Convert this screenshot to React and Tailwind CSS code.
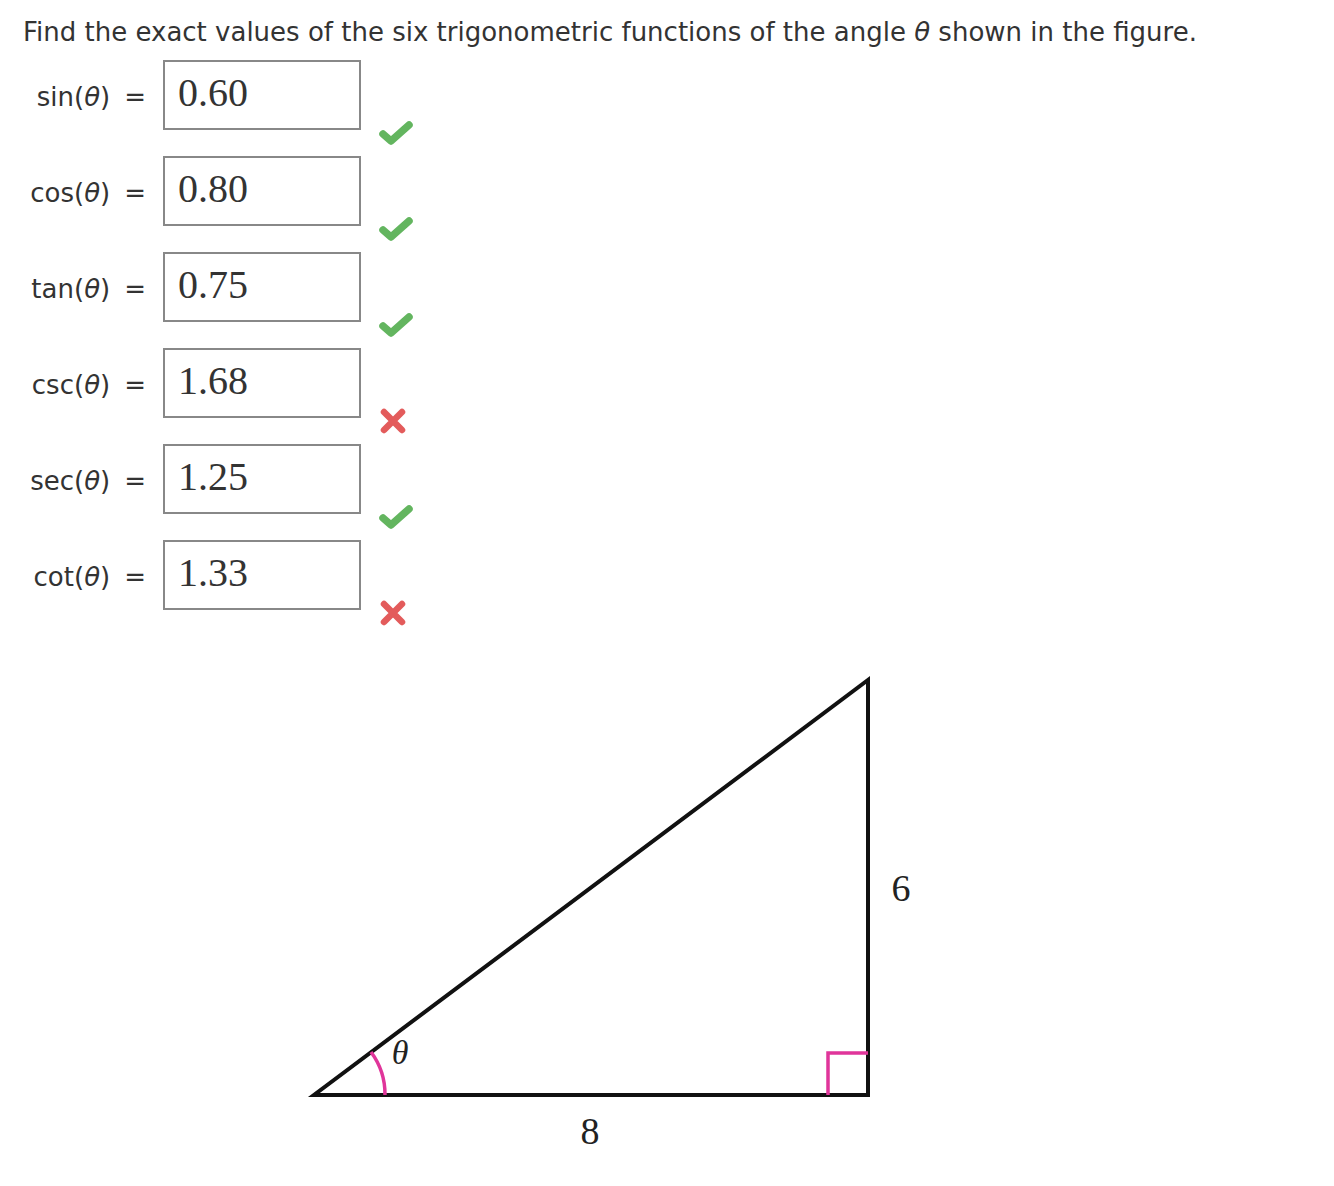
import React from 'react';

const rows = [
  { fn: 'sin', value: '0.60', ok: true },
  { fn: 'cos', value: '0.80', ok: true },
  { fn: 'tan', value: '0.75', ok: true },
  { fn: 'csc', value: '1.68', ok: false },
  { fn: 'sec', value: '1.25', ok: true },
  { fn: 'cot', value: '1.33', ok: false },
];

const Check = () => (
  <svg width="34" height="26" viewBox="0 0 34 26">
    <path d="M4 14 L12 21 L30 5" fill="none" stroke="#63b55f" strokeWidth="7.5" strokeLinecap="round" strokeLinejoin="round" />
  </svg>
);

const Cross = () => (
  <svg width="28" height="26" viewBox="0 0 28 26">
    <path d="M5 4 L23 22 M23 4 L5 22" fill="none" stroke="#e35b5b" strokeWidth="6.5" strokeLinecap="round" />
  </svg>
);

const App = () => {
  return (
    <div className="w-[1334px] h-[1186px] overflow-hidden bg-white text-[#333] font-['DejaVu_Sans',Verdana,sans-serif]">
      <p className="pl-[23px] pt-[16px] text-[26px] leading-[32px]">
        Find the exact values of the six trigonometric functions of the angle <i>θ</i> shown in the figure.
      </p>

      <div className="mt-[12px] flex flex-col gap-[26px]">
        {rows.map(r => (
          <div key={r.fn} className="flex items-start h-[70px]">
            <div className="w-[163px] h-[70px] flex items-center justify-end pr-[17px] pt-[4px] text-[26px]">
              <span>{r.fn}(<i>θ</i>)</span>
              <span className="ml-[14px]">=</span>
            </div>
            <div className="w-[198px] h-[70px] border-2 border-[#888] pl-[13px] pt-[8px] text-[40px] leading-[46px] font-['Liberation_Serif',serif] text-[#333]">
              {r.value}
            </div>
            <div className="ml-[18px] mt-[60px]">
              {r.ok ? <Check /> : <Cross />}
            </div>
          </div>
        ))}
      </div>

      <div className="ml-[300px] mt-[50px]">
        <svg width="640" height="500" viewBox="300 660 640 500">
          <polygon points="314,1095 868,1095 868,680" fill="none" stroke="#111" strokeWidth="4" strokeLinejoin="miter" />
          <path d="M385 1095 A71 71 0 0 0 371 1052" fill="none" stroke="#e0359a" strokeWidth="3.5" />
          <polyline points="828,1095 828,1053 868,1053" fill="none" stroke="#e0359a" strokeWidth="3.5" />
          <text x="400" y="1064" fontFamily="Liberation Serif, serif" fontStyle="italic" fontSize="34" fill="#222" textAnchor="middle">θ</text>
          <text x="901" y="901" fontFamily="Liberation Serif, serif" fontSize="38" fill="#222" textAnchor="middle">6</text>
          <text x="590" y="1144" fontFamily="Liberation Serif, serif" fontSize="38" fill="#222" textAnchor="middle">8</text>
        </svg>
      </div>
    </div>
  );
};

export default App;
